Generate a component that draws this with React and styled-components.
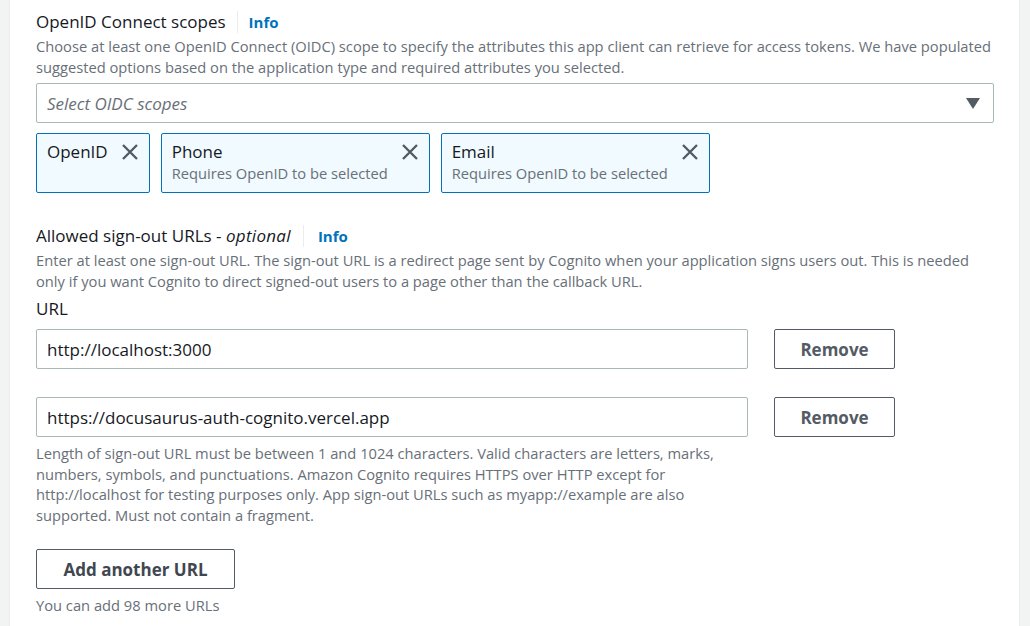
import React from "react";
import styled, { createGlobalStyle } from "styled-components";

const GlobalStyle = createGlobalStyle`
  * { box-sizing: border-box; }
  body {
    margin: 0;
    background: #f2f3f3;
    font-family: "Open Sans", "Noto Sans", Arial, sans-serif;
    color: #16191f;
  }
`;

const Panel = styled.div`
  margin: 0 10px 0 9px;
  min-height: 626px;
  background: #ffffff;
  border-left: 1px solid #eaeded;
  border-right: 1px solid #eaeded;
  padding: 11px 25px 0 26px;
`;

const Section = styled.div`
  margin-top: ${({ gap }) => gap || 0}px;
`;

const TitleRow = styled.div`
  display: flex;
  align-items: center;
  height: 22px;
`;

const Title = styled.span`
  font-size: 17px;
  line-height: 22px;
  color: #16191f;
  em {
    font-style: italic;
    letter-spacing: 0.3px;
  }
`;

const Divider = styled.span`
  width: 1px;
  height: 22px;
  background: #eaeded;
  margin: 0 ${({ wide }) => (wide ? 14 : 11)}px 0 ${({ wide }) => (wide ? 12 : 11)}px;
`;

const InfoLink = styled.a`
  font-size: 15px;
  font-weight: 700;
  color: #0073bb;
  text-decoration: none;
  cursor: pointer;
`;

const Description = styled.p`
  margin: ${({ top }) => top || 0}px 0 0;
  font-size: 14.7px;
  line-height: ${({ lh }) => lh || 21}px;
  color: #687078;
  max-width: ${({ max }) => (max ? `${max}px` : "none")};
`;

const Select = styled.div`
  margin-top: 5px;
  height: 40px;
  border: 1px solid #aab7b8;
  border-radius: 2px;
  display: flex;
  align-items: center;
  justify-content: space-between;
  padding: 0 13px 0 10px;
  cursor: pointer;
`;

const Placeholder = styled.span`
  font-size: 17px;
  font-style: italic;
  color: #687078;
`;

const TokenList = styled.div`
  display: flex;
  gap: 11px;
  margin-top: 10px;
`;

const Token = styled.div`
  display: flex;
  align-items: flex-start;
  height: 60px;
  padding: 6px 10px 0 10px;
  background: #f1faff;
  border: 1px solid #0073bb;
  border-radius: 2px;
`;

const TokenText = styled.div`
  display: flex;
  flex-direction: column;
  margin-right: 13px;
`;

const TokenLabel = styled.span`
  font-size: 17px;
  line-height: 23px;
  color: #16191f;
`;

const TokenSub = styled.span`
  font-size: 14.7px;
  line-height: 21px;
  color: #687078;
`;

const Dismiss = styled.button`
  margin-left: auto;
  margin-top: 3px;
  padding: 0;
  border: none;
  background: none;
  display: flex;
  cursor: pointer;
`;

const Label = styled.div`
  margin-top: 6px;
  font-size: 17px;
  line-height: 22px;
  color: #16191f;
`;

const UrlList = styled.div`
  display: flex;
  flex-direction: column;
  gap: 28px;
  margin-top: 9px;
`;

const UrlRow = styled.div`
  display: flex;
  gap: 26px;
`;

const Input = styled.input`
  width: 712px;
  height: 40px;
  border: 1px solid #aab7b8;
  border-radius: 2px;
  padding: 0 10px;
  font-family: inherit;
  font-size: 17px;
  color: #16191f;
  outline: none;
`;

const Button = styled.button`
  width: ${({ w }) => w}px;
  height: 40px;
  background: #ffffff;
  border: 1px solid #545b64;
  border-radius: 2px;
  font-family: inherit;
  font-size: 17px;
  font-weight: 700;
  color: ${({ dark }) => (dark ? "#414750" : "#545b64")};
  cursor: pointer;
  margin-top: ${({ top }) => top || 0}px;
`;

const XIcon = () => (
  <svg width="18" height="18" viewBox="0 0 18 18" fill="none">
    <path d="M2 2L16 16M16 2L2 16" stroke="#545b64" strokeWidth="2.4" />
  </svg>
);

const Caret = () => (
  <svg width="14" height="11" viewBox="0 0 14 11">
    <path d="M0 0H14L7 11Z" fill="#545b64" />
  </svg>
);

const scopes = [
  { label: "OpenID" },
  { label: "Phone", sub: "Requires OpenID to be selected" },
  { label: "Email", sub: "Requires OpenID to be selected" },
];

const urls = ["http://localhost:3000", "https://docusaurus-auth-cognito.vercel.app"];

const App = () => {
  return (
    <>
      <GlobalStyle />
      <Panel>
        <Section>
          <TitleRow>
            <Title>OpenID Connect scopes</Title>
            <Divider />
            <InfoLink>Info</InfoLink>
          </TitleRow>
          <Description top={3}>
            Choose at least one OpenID Connect (OIDC) scope to specify the attributes this app client can retrieve for
            access tokens. We have populated suggested options based on the application type and required attributes
            you selected.
          </Description>
          <Select>
            <Placeholder>Select OIDC scopes</Placeholder>
            <Caret />
          </Select>
          <TokenList>
            {scopes.map(({ label, sub }) => (
              <Token key={label}>
                <TokenText>
                  <TokenLabel>{label}</TokenLabel>
                  {sub && <TokenSub>{sub}</TokenSub>}
                </TokenText>
                <Dismiss aria-label={`Remove ${label}`}>
                  <XIcon />
                </Dismiss>
              </Token>
            ))}
          </TokenList>
        </Section>

        <Section gap={32}>
          <TitleRow>
            <Title>
              Allowed sign-out URLs - <em>optional</em>
            </Title>
            <Divider wide />
            <InfoLink>Info</InfoLink>
          </TitleRow>
          <Description top={3}>
            Enter at least one sign-out URL. The sign-out URL is a redirect page sent by Cognito when your application
            signs users out. This is needed only if you want Cognito to direct signed-out users to a page other than the
            callback URL.
          </Description>
          <Label>URL</Label>
          <UrlList>
            {urls.map((u) => (
              <UrlRow key={u}>
                <Input defaultValue={u} />
                <Button w={121}>Remove</Button>
              </UrlRow>
            ))}
          </UrlList>
          <Description top={6} lh={20.5} max={712}>
            Length of sign-out URL must be between 1 and 1024 characters. Valid characters are letters, marks, numbers,
            symbols, and punctuations. Amazon Cognito requires HTTPS over HTTP except for http://localhost for testing
            purposes only. App sign-out URLs such as myapp://example are also supported. Must not contain a fragment.
          </Description>
          <Button w={199} top={24} dark>
            Add another URL
          </Button>
          <Description top={6} lh={20}>
            You can add 98 more URLs
          </Description>
        </Section>
      </Panel>
    </>
  );
};

export default App;
